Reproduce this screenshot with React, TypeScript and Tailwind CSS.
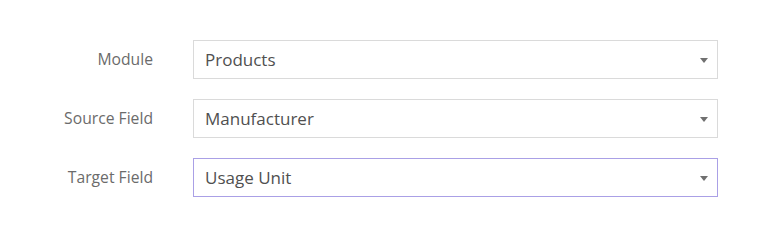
const rows = [
  { label: 'Module', value: 'Products', focused: false },
  { label: 'Source Field', value: 'Manufacturer', focused: false },
  { label: 'Target Field', value: 'Usage Unit', focused: true },
]

export default function App() {
  return (
    <div className="w-[768px] h-[228px] bg-white pt-[40px] font-['Open_Sans',sans-serif]">
      <div className="flex flex-col gap-[20px]">
        {rows.map((row) => (
          <div key={row.label} className="flex items-center">
            <label className="w-[154px] pr-[1px] text-right text-[15.7px] text-[#6b6b6b]">
              {row.label}
            </label>
            <div
              className={`ml-[39px] w-[525px] h-[39px] flex items-center justify-between pl-[11px] pr-[9px] border ${
                row.focused ? 'border-[#aaa0e6]' : 'border-[#dadada]'
              }`}
            >
              <span className="text-[17px] text-[#505050]">{row.value}</span>
              <svg width="8" height="5" viewBox="0 0 8 5" className="mt-[1px]">
                <path d="M0 0 L8 0 L4 5 Z" fill="#707070" />
              </svg>
            </div>
          </div>
        ))}
      </div>
    </div>
  )
}
